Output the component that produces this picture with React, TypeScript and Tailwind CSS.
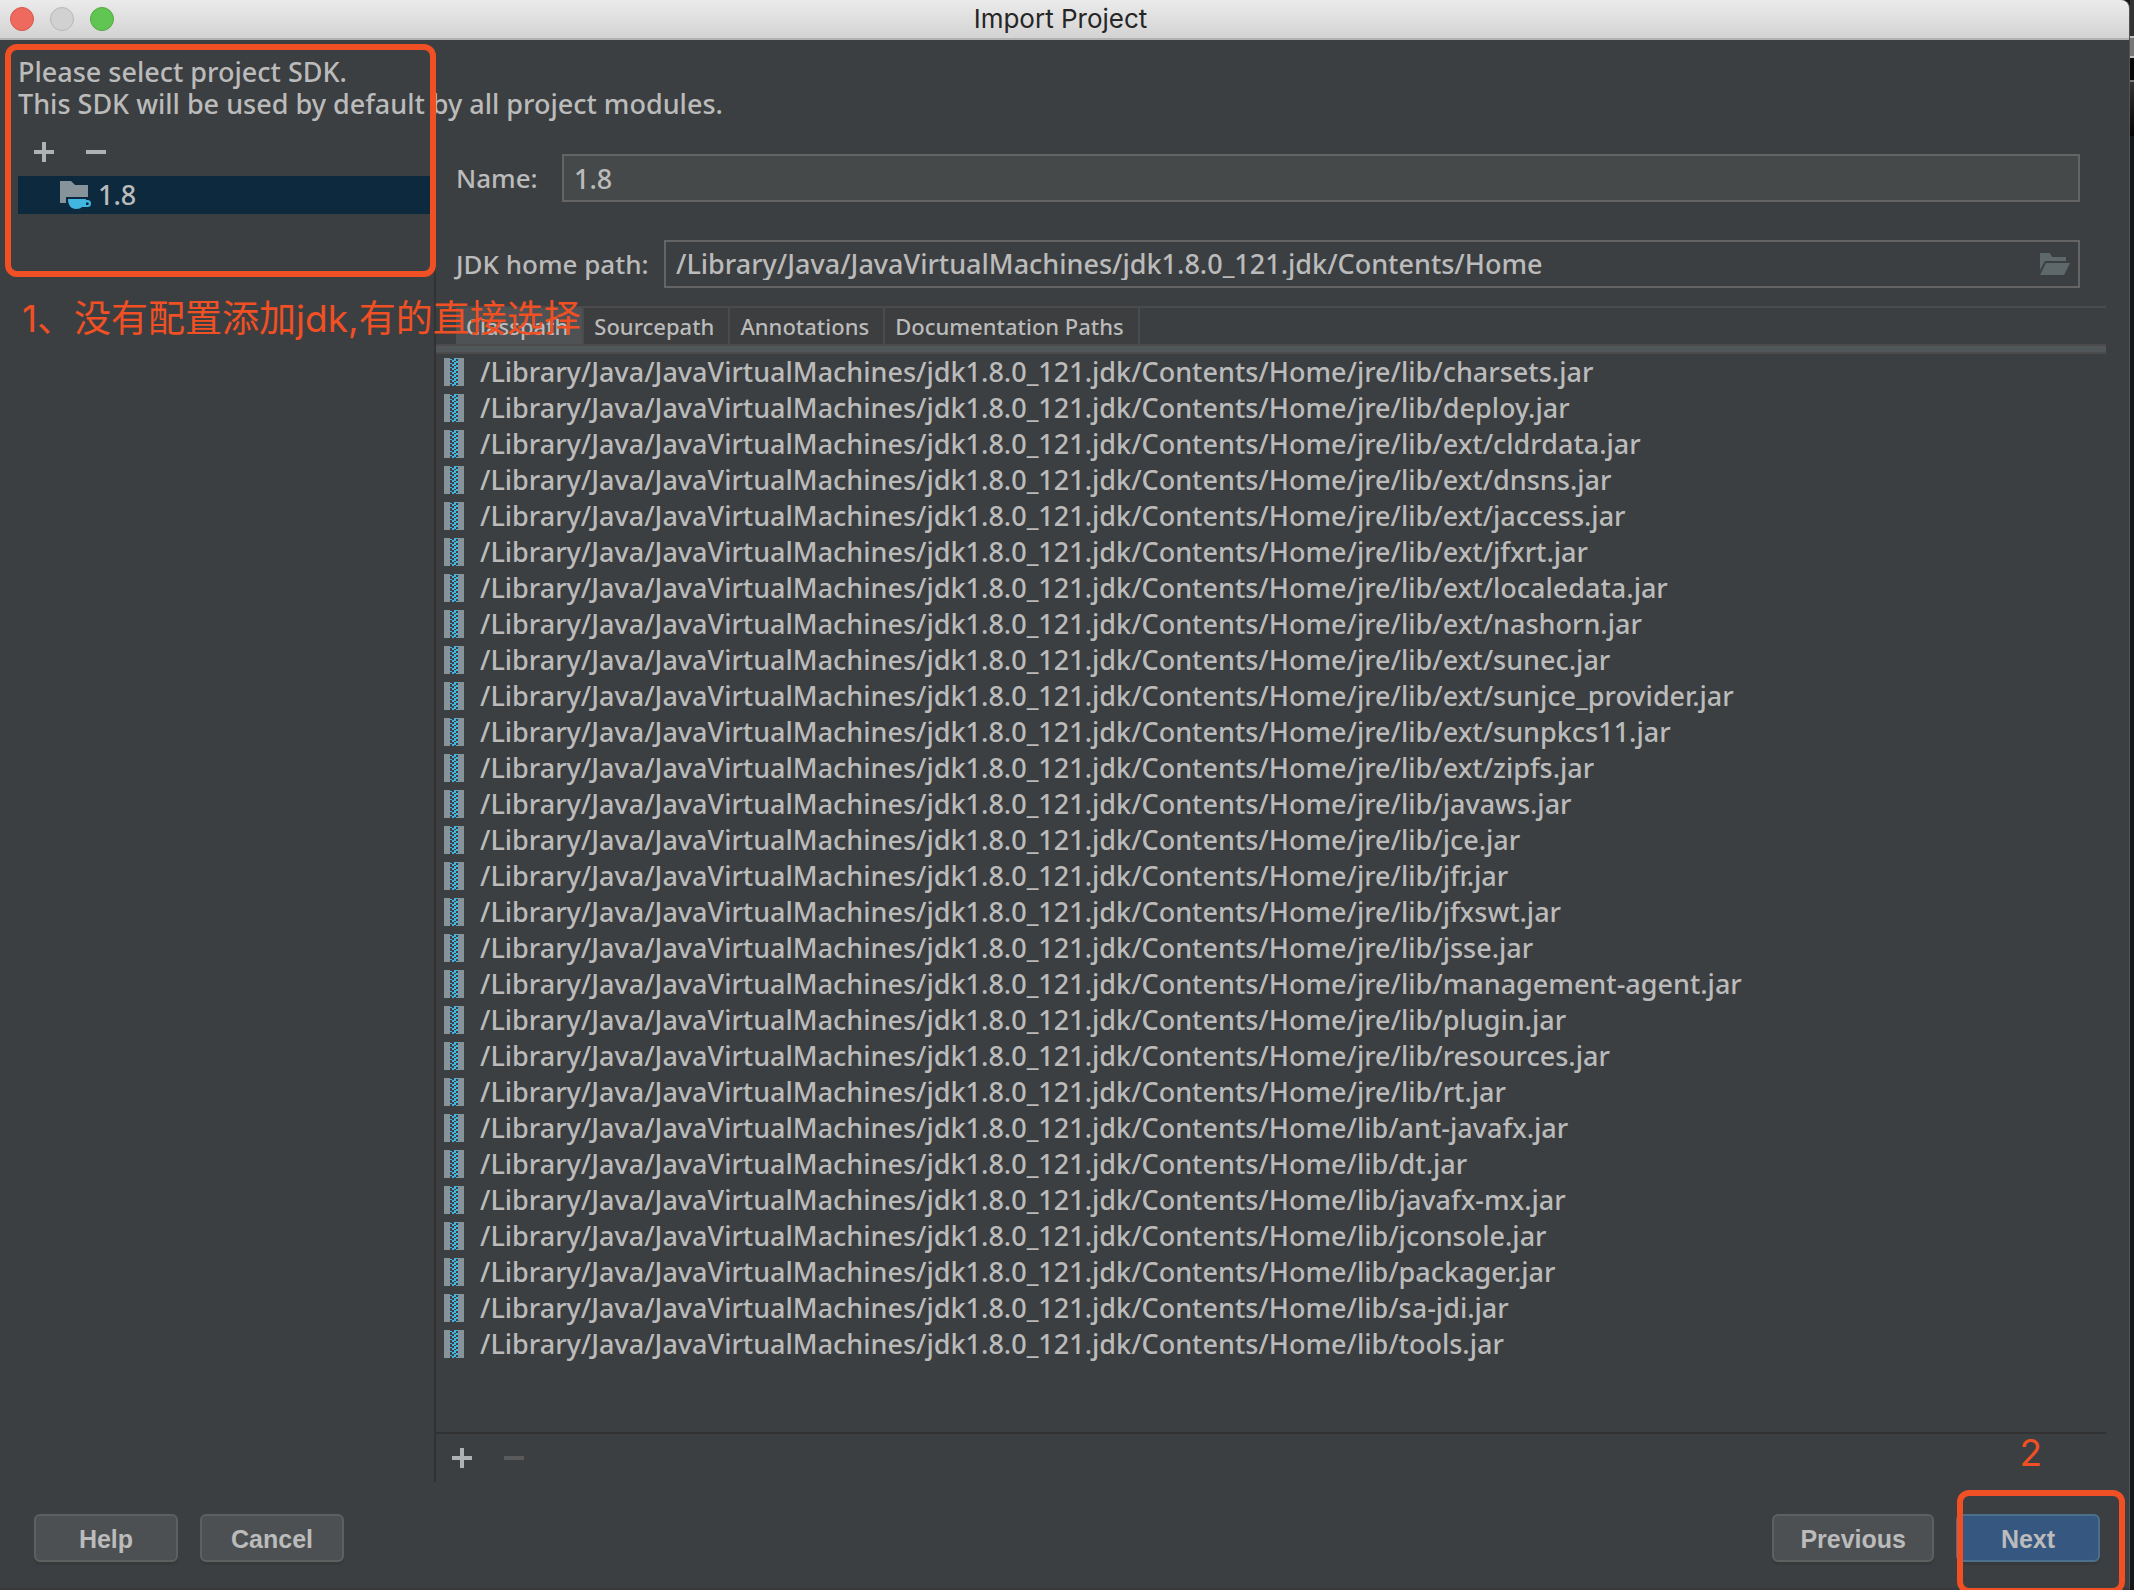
import { useState } from 'react';

const JDK_HOME = '/Library/Java/JavaVirtualMachines/jdk1.8.0_121.jdk/Contents/Home';

const JARS = [
  'jre/lib/charsets.jar',
  'jre/lib/deploy.jar',
  'jre/lib/ext/cldrdata.jar',
  'jre/lib/ext/dnsns.jar',
  'jre/lib/ext/jaccess.jar',
  'jre/lib/ext/jfxrt.jar',
  'jre/lib/ext/localedata.jar',
  'jre/lib/ext/nashorn.jar',
  'jre/lib/ext/sunec.jar',
  'jre/lib/ext/sunjce_provider.jar',
  'jre/lib/ext/sunpkcs11.jar',
  'jre/lib/ext/zipfs.jar',
  'jre/lib/javaws.jar',
  'jre/lib/jce.jar',
  'jre/lib/jfr.jar',
  'jre/lib/jfxswt.jar',
  'jre/lib/jsse.jar',
  'jre/lib/management-agent.jar',
  'jre/lib/plugin.jar',
  'jre/lib/resources.jar',
  'jre/lib/rt.jar',
  'lib/ant-javafx.jar',
  'lib/dt.jar',
  'lib/javafx-mx.jar',
  'lib/jconsole.jar',
  'lib/packager.jar',
  'lib/sa-jdi.jar',
  'lib/tools.jar',
];

const TABS = ['Classpath', 'Sourcepath', 'Annotations', 'Documentation Paths'];

function PlusIcon() {
  return (
    <svg width="20" height="20" viewBox="0 0 20 20" fill="currentColor">
      <path d="M8 0h4v8h8v4h-8v8H8v-8H0V8h8z" />
    </svg>
  );
}

function MinusIcon() {
  return (
    <svg width="20" height="20" viewBox="0 0 20 20" fill="currentColor">
      <path d="M0 8h20v4H0z" />
    </svg>
  );
}

function JdkIcon() {
  return (
    <svg width="32" height="28" viewBox="0 0 32 28" className="shrink-0">
      <path d="M0 0h11l4 4h13v14H7v4H0z" fill="#87939a" />
      <path d="M6 16h26v12H6z" fill="#0d293e" />
      <path
        d="M8 18h18v1h1.500a3.500 3.500 0 0 1 0 7H22c-1 1.300-3 2-6 2-5 0-8-4-8-10zM26 21.500v2.500h1.500a1.200 1.200 0 0 0 0-2.500z"
        fill="#40b6e0"
        fillRule="evenodd"
      />
    </svg>
  );
}

function FolderOpenIcon() {
  return (
    <svg width="30" height="22" viewBox="0 0 30 22" fill="#5e686b">
      <path d="M0 0h10l2 4h14v4H5L0 17z" />
      <path d="M6 10h24l-6 12H0z" />
    </svg>
  );
}

function JarIcon() {
  return (
    <svg width="20" height="28" viewBox="0 0 20 28" className="shrink-0">
      <path d="M0 0h6v28H0zM14 0h6v28h-6z" fill="#87939a" />
      {[0, 4, 8, 12, 16, 20, 24].map((y) => (
        <path key={y} d={`M10 ${y}h4v1h-2v1h-2zM6 ${y + 1}h2v1h2v1H8v-1H6zM10 ${y + 2}h2v1h2v1h-2v-1h-2zM8 ${y + 3}h2v1H8z`} fill="#40b6e0" />
      ))}
    </svg>
  );
}

function DialogButton({ label, primary }: { label: string; primary?: boolean }) {
  return (
    <button
      type="button"
      className={`h-12 min-w-36 rounded-md border-2 px-[26px] pt-px text-[25px] leading-7 font-bold font-['Liberation_Sans',sans-serif] shadow-[0_3px_0_#37393a] ${
        primary ? 'border-[#4c708c] bg-[#365880]' : 'border-[#5e6060] bg-[#4c5052]'
      }`}
    >
      {label}
    </button>
  );
}

export default function App() {
  const [tab, setTab] = useState('Classpath');
  const [name, setName] = useState('1.8');
  const [home, setHome] = useState(JDK_HOME);

  return (
    <div className="relative flex min-h-screen overflow-hidden bg-[#151617] text-[27px] leading-8 font-medium text-[#bbbbbb] font-['Noto_Sans',sans-serif]">
      <div className="flex min-w-0 flex-1 flex-col rounded-tr-lg border-r border-b-2 border-[#505355] border-b-[#37393a] bg-[#3c3f41]">
        {/* Title bar */}
        <header className="relative flex h-10 items-center rounded-tr-lg border-b-2 border-[#b1b1b1] bg-linear-to-b from-[#ebebeb] to-[#d3d3d3] pl-[10px]">
          <div className="flex gap-4">
            <span className="size-6 rounded-full border border-[#d9554c] bg-[#ee6a5f]" />
            <span className="size-6 rounded-full border border-[#b8b8b8] bg-[#d1d1d1]" />
            <span className="size-6 rounded-full border border-[#53a93f] bg-[#61c554]" />
          </div>
          <h1 className="absolute inset-x-0 pr-2 text-center text-[26px] font-normal text-[#262626] font-['Inter',sans-serif]">
            Import Project
          </h1>
        </header>

        <p className="px-[18px] pt-4">
          Please select project SDK.
          <br />
          This SDK will be used by default by all project modules.
        </p>

        <div className="flex flex-1">
          <aside className="w-[436px] shrink-0 border-r-2 border-[#323232] pt-[22px] pl-[18px]">
            <div className="flex h-5 gap-8 pl-4 text-[#afb1b3]">
              <button type="button" aria-label="Add SDK"><PlusIcon /></button>
              <button type="button" aria-label="Remove SDK"><MinusIcon /></button>
            </div>
            <ul className="mt-[14px]">
              <li className="flex h-[38px] items-center gap-[6px] bg-[#0d293e] pl-[42px]">
                <JdkIcon />
                1.8
              </li>
            </ul>
          </aside>

          <main className="flex min-w-0 flex-1 flex-col pr-[23px]">
            <div className="flex flex-col gap-[38px] pt-[34px] pr-[26px] pl-5">
              <div className="flex items-center">
                <label htmlFor="sdk-name" className="w-[106px] shrink-0 text-[26px]">Name:</label>
                <input
                  id="sdk-name"
                  value={name}
                  onChange={(e) => setName(e.target.value)}
                  className="h-12 min-w-0 flex-1 border-2 border-[#646464] bg-[#45494a] px-[10px] outline-none"
                />
              </div>
              <div className="flex items-center">
                <label htmlFor="sdk-home" className="w-[208px] shrink-0 text-[26px]">JDK home path:</label>
                <div className="flex h-12 min-w-0 flex-1 items-center border-2 border-[#646464] pr-2 pl-[10px]">
                  <input
                    id="sdk-home"
                    value={home}
                    onChange={(e) => setHome(e.target.value)}
                    className="min-w-0 flex-1 bg-transparent outline-none"
                  />
                  <button type="button" aria-label="Browse"><FolderOpenIcon /></button>
                </div>
              </div>
            </div>

            <div role="tablist" className="mt-[18px] flex border-t-2 border-[#4b4b4b] pl-5 text-[22px] leading-9">
              {TABS.map((t) => (
                <button
                  key={t}
                  type="button"
                  role="tab"
                  aria-selected={t === tab}
                  onClick={() => setTab(t)}
                  className={`border-r-2 border-[#4b4b4b] pr-[14px] pl-[10px] ${t === tab ? 'bg-[#4e5254]' : 'bg-[#3c3e3f]'}`}
                >
                  {t}
                </button>
              ))}
            </div>
            <div className="h-[10px] border-y-2 border-[#4b4b4b] bg-[#515658]" />

            <ul className="flex-1 border-b-2 border-[#323232]">
              {JARS.map((jar) => (
                <li key={jar} className="flex h-9 items-center gap-4 pl-2">
                  <JarIcon />
                  {`${JDK_HOME}/${jar}`}
                </li>
              ))}
            </ul>

            <div className="flex h-12 items-center gap-8 pl-4">
              <button type="button" aria-label="Add path" className="text-[#afb1b3]"><PlusIcon /></button>
              <button type="button" aria-label="Remove path" disabled className="text-[#5a5a5a]"><MinusIcon /></button>
            </div>
          </main>
        </div>

        <footer className="flex gap-[22px] pt-8 pr-[29px] pb-[26px] pl-[34px]">
          <DialogButton label="Help" />
          <DialogButton label="Cancel" />
          <span className="flex-1" />
          <DialogButton label="Previous" />
          <DialogButton label="Next" primary />
        </footer>
      </div>

      {/* Edge of the window behind the dialog */}
      <div className="flex w-1 shrink-0 flex-col">
        <div className="h-9 bg-[#333333]" />
        <div className="h-[22px] border-y-2 border-[#c0c0c0] bg-[#777777]" />
        <div className="h-[22px] bg-[#080808]" />
        <div className="h-14 border-t-2 border-[#777777] bg-linear-to-b from-[#333333] to-[#050505]" />
      </div>

      {/* Step annotations */}
      <div className="pointer-events-none absolute top-[44px] left-[5px] h-[233px] w-[431px] rounded-xl border-6 border-[#f05023]" />
      <p className="pointer-events-none absolute top-[292px] left-[22px] text-[37px] leading-[54px] font-normal text-[#f05023] font-['Inter','Noto_Sans_CJK_SC',sans-serif]">
        1、没有配置添加jdk,有的直接选择
      </p>
      <p className="pointer-events-none absolute right-[92px] bottom-[110px] text-[37px] leading-[54px] font-normal text-[#f05023] font-['Inter','Noto_Sans_CJK_SC',sans-serif]">
        2
      </p>
      <div className="pointer-events-none absolute right-[9px] -bottom-1 h-[104px] w-[168px] rounded-xl border-6 border-[#f05023]" />
    </div>
  );
}
